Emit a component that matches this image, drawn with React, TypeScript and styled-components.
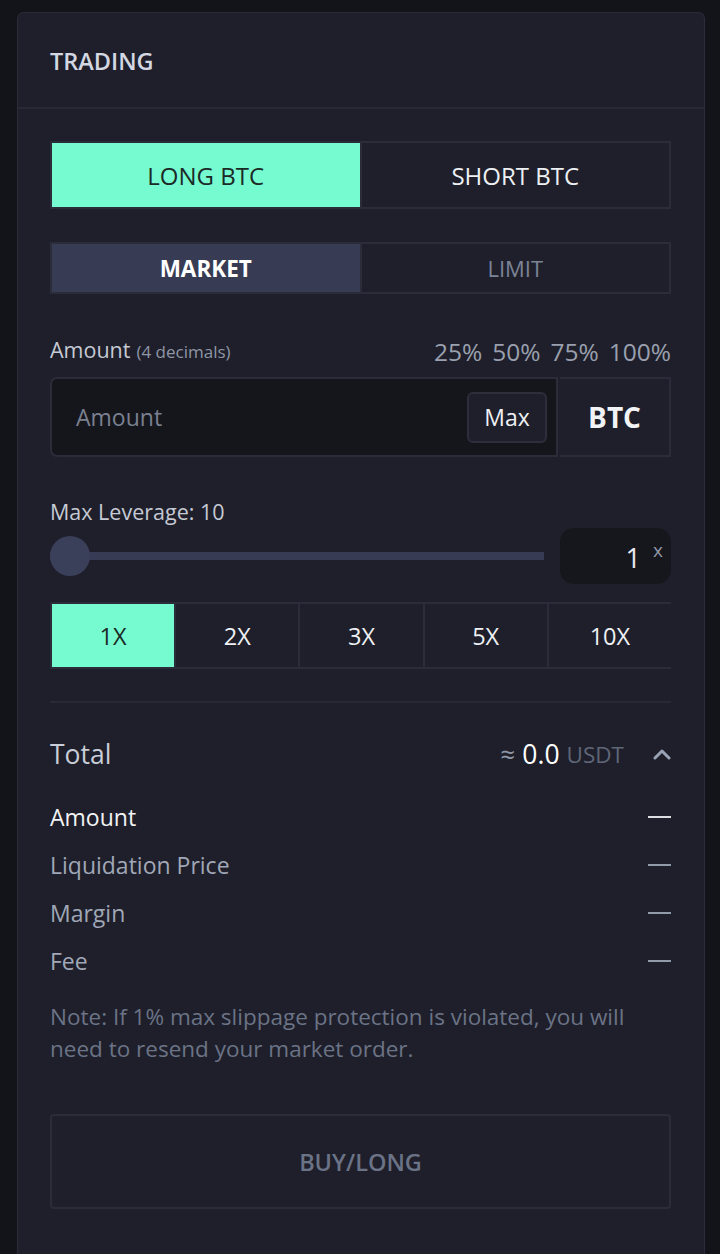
import React from "react";
import styled, { createGlobalStyle } from "styled-components";

const Global = createGlobalStyle`
  html, body { margin: 0; padding: 0; background: #131419; }
  body { font-family: "Open Sans", "Noto Sans", "DejaVu Sans", sans-serif; }
  * { box-sizing: border-box; }
`;

const Page = styled.div`
  min-height: 1254px;
  padding: 12px 15px 0 17px;
  display: flex;
`;

const Card = styled.div`
  flex: 1;
  background: #1e1f2a;
  border: 1px solid #2a2c39;
  border-bottom: none;
  border-radius: 7px 7px 0 0;
  display: flex;
  flex-direction: column;
`;

const Header = styled.div`
  height: 96px;
  padding: 2px 32px 0;
  display: flex;
  align-items: center;
  border-bottom: 2px solid #272935;
  font-size: 23.5px;
  font-weight: 600;
  color: #d3d7e1;
`;

const Body = styled.div`
  padding: 32px 33px 40px 32px;
  display: flex;
  flex-direction: column;
`;

const Segmented = styled.div<{ $h: number; $mt?: number }>`
  display: grid;
  grid-template-columns: 1fr 1fr;
  height: ${(p) => p.$h}px;
  margin-top: ${(p) => p.$mt ?? 0}px;
  border: 2px solid #2a2c39;
  gap: 2px;
  background: #2a2c39;
`;

const SideBtn = styled.div<{ $active?: boolean }>`
  display: flex;
  align-items: center;
  justify-content: center;
  background: ${(p) => (p.$active ? "#76fbd1" : "#1e1f2a")};
  color: ${(p) => (p.$active ? "#1b2a26" : "#eef0f4")};
  font-size: 24px;
`;

const TypeBtn = styled.div<{ $active?: boolean }>`
  display: flex;
  align-items: center;
  justify-content: center;
  background: ${(p) => (p.$active ? "#373b53" : "#1e1f2a")};
  color: ${(p) => (p.$active ? "#ffffff" : "#7c8496")};
  font-weight: ${(p) => (p.$active ? 700 : 400)};
  font-size: ${(p) => (p.$active ? 22.5 : 22)}px;
`;

const LabelRow = styled.div<{ $mt: number }>`
  margin-top: ${(p) => p.$mt}px;
  display: flex;
  align-items: baseline;
  justify-content: space-between;
  height: 26px;
`;

const Label = styled.span`
  font-size: 21.5px;
  color: #c6cad4;
`;

const Sub = styled.span`
  font-size: 17px;
  color: #8f96a6;
  margin-left: 6px;
`;

const Percents = styled.div`
  display: flex;
  gap: 10px;
  font-size: 24.5px;
  color: #9aa0ae;
  position: relative;
  top: 3px;
`;

const InputRow = styled.div`
  margin-top: 19px;
  height: 80px;
  display: flex;
  gap: 2px;
`;

const InputBox = styled.div`
  flex: 1;
  background: #15161c;
  border: 2px solid #2a2c39;
  border-radius: 7px 0 0 7px;
  display: flex;
  align-items: center;
  justify-content: space-between;
  padding: 0 9px 0 24px;
`;

const Placeholder = styled.span`
  font-size: 23px;
  color: #7a8090;
`;

const MaxBtn = styled.div`
  width: 80px;
  height: 51px;
  border: 2px solid #2c2e3b;
  border-radius: 6px;
  background: #1e1f2a;
  display: flex;
  align-items: center;
  justify-content: center;
  font-size: 23px;
  color: #eef0f4;
`;

const Unit = styled.div`
  width: 111px;
  border: 2px solid #2a2c39;
  border-left: none;
  display: flex;
  align-items: center;
  justify-content: center;
  font-size: 28px;
  font-weight: 700;
  color: #f2f3f6;
`;

const SliderRow = styled.div`
  margin-top: 5px;
  height: 56px;
  display: flex;
  align-items: center;
  gap: 16px;
`;

const Track = styled.div`
  flex: 1;
  height: 8px;
  background: #373b53;
  position: relative;
  display: flex;
  align-items: center;
`;

const Thumb = styled.div`
  position: absolute;
  left: 0;
  width: 40px;
  height: 40px;
  border-radius: 50%;
  background: #3a3f5a;
`;

const LevBox = styled.div`
  width: 111px;
  height: 56px;
  border-radius: 14px;
  background: #16171d;
  display: flex;
  align-items: center;
  justify-content: flex-end;
  padding-right: 8px;
  gap: 12px;
`;

const LevVal = styled.span`
  font-size: 27px;
  color: #e6e8ee;
  margin-top: 2px;
`;

const LevX = styled.span`
  font-size: 19px;
  color: #8f96a6;
  align-self: flex-start;
  margin-top: 9px;
`;

const LevGrid = styled.div`
  margin-top: 18px;
  height: 67px;
  display: grid;
  grid-template-columns: repeat(5, 1fr);
  gap: 2px;
  background: #2a2c39;
  border-top: 2px solid #2a2c39;
  border-bottom: 2px solid #2a2c39;
  border-left: 2px solid #2a2c39;
`;

const LevBtn = styled.div<{ $active?: boolean }>`
  display: flex;
  align-items: center;
  justify-content: center;
  background: ${(p) => (p.$active ? "#76fbd1" : "#1e1f2a")};
  color: ${(p) => (p.$active ? "#1b2a26" : "#eef0f4")};
  font-size: 23.5px;
`;

const Divider = styled.div`
  margin-top: 32px;
  height: 2px;
  background: #272935;
`;

const TotalRow = styled.div`
  margin-top: 33px;
  height: 36px;
  display: flex;
  align-items: center;
  justify-content: space-between;
`;

const TotalLabel = styled.span`
  font-size: 26.5px;
  color: #c9cdd8;
`;

const TotalValue = styled.div`
  display: flex;
  align-items: center;
  gap: 7px;
`;

const Approx = styled.span`
  font-size: 26px;
  color: #8f96a6;
`;

const Big = styled.span`
  font-size: 26.5px;
  color: #ffffff;
`;

const Cur = styled.span`
  font-size: 22.5px;
  color: #5f6677;
  margin-right: 22px;
`;

const Details = styled.div`
  margin-top: 21px;
  display: flex;
  flex-direction: column;
`;

const DRow = styled.div<{ $bright?: boolean }>`
  height: 48px;
  display: flex;
  align-items: center;
  justify-content: space-between;
  font-size: 23px;
  color: ${(p) => (p.$bright ? "#f2f3f6" : "#a0a7b7")};
`;

const Dash = styled.span`
  width: 23px;
  height: 1.5px;
  background: currentColor;
  opacity: 0.9;
`;

const Note = styled.p`
  margin: 16px 0 0;
  font-size: 22.5px;
  line-height: 32px;
  color: #6b7386;
`;

const Submit = styled.div`
  margin-top: 49px;
  height: 95px;
  border: 2px solid #2a2c39;
  border-radius: 4px;
  display: flex;
  align-items: center;
  justify-content: center;
  font-size: 23.5px;
  font-weight: 600;
  color: #6b7386;
`;

const rows = [
  { label: "Amount", bright: true },
  { label: "Liquidation Price" },
  { label: "Margin" },
  { label: "Fee" },
];

export default function App() {
  return (
    <>
      <Global />
      <Page>
        <Card>
          <Header>TRADING</Header>
          <Body>
            <Segmented $h={68}>
              <SideBtn $active>LONG BTC</SideBtn>
              <SideBtn>SHORT BTC</SideBtn>
            </Segmented>
            <Segmented $h={52} $mt={33}>
              <TypeBtn $active>MARKET</TypeBtn>
              <TypeBtn>LIMIT</TypeBtn>
            </Segmented>
            <LabelRow $mt={38}>
              <Label>
                Amount<Sub>(4 decimals)</Sub>
              </Label>
              <Percents>
                <span>25%</span>
                <span>50%</span>
                <span>75%</span>
                <span>100%</span>
              </Percents>
            </LabelRow>
            <InputRow>
              <InputBox>
                <Placeholder>Amount</Placeholder>
                <MaxBtn>Max</MaxBtn>
              </InputBox>
              <Unit>BTC</Unit>
            </InputRow>
            <LabelRow $mt={40}>
              <Label>Max Leverage: 10</Label>
            </LabelRow>
            <SliderRow>
              <Track>
                <Thumb />
              </Track>
              <LevBox>
                <LevVal>1</LevVal>
                <LevX>x</LevX>
              </LevBox>
            </SliderRow>
            <LevGrid>
              {["1X", "2X", "3X", "5X", "10X"].map((l, i) => (
                <LevBtn key={l} $active={i === 0}>
                  {l}
                </LevBtn>
              ))}
            </LevGrid>
            <Divider />
            <TotalRow>
              <TotalLabel>Total</TotalLabel>
              <TotalValue>
                <Approx>≈</Approx>
                <Big>0.0</Big>
                <Cur>USDT</Cur>
                <svg width="18" height="12" viewBox="0 0 18 12">
                  <polyline
                    points="2,10 9,3 16,10"
                    fill="none"
                    stroke="#9aa3b5"
                    strokeWidth="3"
                    strokeLinecap="round"
                    strokeLinejoin="round"
                  />
                </svg>
              </TotalValue>
            </TotalRow>
            <Details>
              {rows.map((r) => (
                <DRow key={r.label} $bright={r.bright}>
                  <span>{r.label}</span>
                  <Dash />
                </DRow>
              ))}
            </Details>
            <Note>
              Note: If 1% max slippage protection is violated, you will need to
              resend your market order.
            </Note>
            <Submit>BUY/LONG</Submit>
          </Body>
        </Card>
      </Page>
    </>
  );
}
